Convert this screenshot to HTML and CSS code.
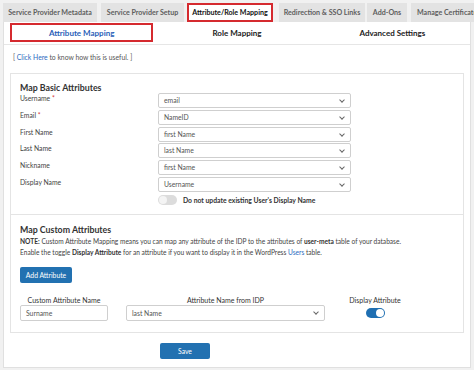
FILE: index.html
```html
<!DOCTYPE html>
<html>
<head>
<meta charset="utf-8">
<link rel="stylesheet" href="styles.css">
</head>
<body>
<div class="page">
  <nav class="tabs">
    <div class="tab t1">Service Provider Metadata</div>
    <div class="tab t2">Service Provider Setup</div>
    <div class="tab t3 active">Attribute/Role Mapping</div>
    <div class="tab t4">Redirection &amp; SSO Links</div>
    <div class="tab t5">Add-Ons</div>
    <div class="tab t6">Manage Certificate</div>
  </nav>
  <div class="panel">
    <div class="subtabs">
      <div class="subtab current"><span>Attribute Mapping</span></div>
      <div class="subtab">Role Mapping</div>
      <div class="subtab">Advanced Settings</div>
    </div>
    <p class="help">[ <a class="link">Click Here</a> to know how this is useful. ]</p>
    <section class="box basic">
      <h3>Map Basic Attributes</h3>
      <div class="rows">
        <div class="row"><label>Username <span class="req">*</span></label><div class="select">email</div></div>
        <div class="row"><label>Email <span class="req">*</span></label><div class="select">NameID</div></div>
        <div class="row"><label>First Name</label><div class="select">first Name</div></div>
        <div class="row"><label>Last Name</label><div class="select">last Name</div></div>
        <div class="row"><label>Nickname</label><div class="select">first Name</div></div>
        <div class="row"><label>Display Name</label><div class="select">Username</div></div>
        <div class="row toggle-row"><label></label><div class="opt"><span class="switch off"></span><span>Do not update existing User's Display Name</span></div></div>
      </div>
    </section>
    <section class="box custom">
      <h3>Map Custom Attributes</h3>
      <p class="note"><b>NOTE:</b> Custom Attribute Mapping means you can map any attribute of the IDP to the attributes of <b>user-meta</b> table of your database.<br>Enable the toggle <b>Display Attribute</b> for an attribute if you want to display it in the WordPress <a class="link">Users</a> table.</p>
      <button class="btn add">Add Attribute</button>
      <div class="cgrid">
        <div class="ch">Custom Attribute Name</div>
        <div class="ch">Attribute Name from IDP</div>
        <div class="ch">Display Attribute</div>
        <div class="input">Surname</div>
        <div class="select">last Name</div>
        <div class="sw"><span class="switch on"></span></div>
      </div>
    </section>
    <div class="actions"><button class="btn save">Save</button></div>
  </div>
</div>
</body>
</html>
```
FILE: styles.css
```css
* { box-sizing: border-box; }
html, body { margin: 0; padding: 0; }
body {
  background: #f1f1f1;
  font-family: "Lato", "Open Sans", sans-serif;
  color: #3c3c3c;
  width: 474px;
  height: 370px;
  overflow: hidden;
}
.page { padding-top: 3px; }
.tabs {
  display: flex;
  padding-left: 3px;
  height: 19px;
  white-space: nowrap;
}
.tab {
  background: #e3e3e3;
  color: #5e5e5e;
  font-size: 7.1px;
  font-weight: 700;
  text-align: center;
  line-height: 19px;
  height: 19px;
  flex: none;
  overflow: hidden;
  margin-right: 4px;
}
.t1 { width: 94px; }
.t2 { width: 83px; }
.t3 { width: 86px; margin-left: -1px; }
.t4 { width: 86px; margin-left: 2px; margin-right: 2px; }
.t5 { width: 40px; }
.t6 { width: 66px; text-align: left; padding-left: 6px; margin-right: 0; }
.tab.active {
  background: #fff;
  color: #111;
  border: 2px solid #d52a2f;
  line-height: 15px;
}
.panel {
  margin: 0 3px 0 3px;
  width: 468px;
  height: 346px;
  background: #fff;
  border: 1px solid #e0e0e0;
  border-top: none;
}
.subtabs {
  display: grid;
  grid-template-columns: repeat(3, 1fr);
  height: 23px;
  border-bottom: 1px solid #e6e6e6;
}
.subtab {
  font-size: 8px;
  font-weight: 700;
  color: #222;
  display: flex;
  align-items: center;
  justify-content: center;
}
.subtab.current { padding: 1px 6px 2px 6px; }
.subtab.current span {
  width: 100%;
  height: 100%;
  border: 2px solid #d52a2f;
  color: #2a5fb8;
  display: flex;
  align-items: center;
  justify-content: center;
}
.help {
  margin: 0;
  padding: 8px 0 0 9px;
  font-size: 6.8px;
  color: #555;
  height: 28px;
}
.link { color: #2a6bc0; }
.box {
  margin: 0 6px;
  border: 1px solid #e4e4e4;
  padding: 0 9px;
}
.box h3 {
  margin: 0;
  font-size: 8.8px;
  font-weight: 700;
  color: #333;
}
.basic { height: 142px; padding-top: 8px; }
.custom { border-top: none; height: 118px; padding-top: 9px; }
.rows { display: flex; flex-direction: column; gap: 2px; margin-top: 0; }
.row { display: flex; align-items: flex-start; height: 14.8px; }
.row label {
  width: 138px;
  font-size: 6.8px;
  color: #444;
  line-height: 9px;
  margin-top: 1px;
}
.req { color: #d63638; }
.select, .input {
  border: 1px solid #cfcfcf;
  border-radius: 2px;
  height: 15px;
  font-size: 6.8px;
  color: #555;
  line-height: 13px;
  padding-left: 5px;
  position: relative;
  background: #fff;
}
.row .select { width: 193px; }
.select::after {
  content: "";
  position: absolute;
  right: 6px;
  top: 4px;
  width: 3px;
  height: 3px;
  border-right: 1px solid #666;
  border-bottom: 1px solid #666;
  transform: rotate(45deg);
}
.toggle-row { margin-top: 1px; }
.opt { display: flex; align-items: center; gap: 6px; font-size: 6.8px; color: #333; font-weight: 700; }
.switch {
  display: inline-block;
  width: 19px;
  height: 10px;
  border-radius: 6px;
  position: relative;
}
.switch::after {
  content: "";
  position: absolute;
  top: 1px;
  width: 8px;
  height: 8px;
  border-radius: 50%;
  background: #fff;
}
.switch.off { background: #dcdcdc; }
.switch.off::after { left: 1px; background: #f4f4f4; }
.switch.on { background: #1f6fb2; }
.switch.on::after { right: 1px; }
.note {
  margin: 1px 0 0 0;
  font-size: 6.6px;
  line-height: 11px;
  color: #444;
}
.note b { color: #333; }
.btn {
  display: block;
  border: none;
  border-radius: 2px;
  background: #2271b1;
  color: #fff;
  font-family: inherit;
  font-size: 6.8px;
  height: 16px;
  padding: 0;
}
.add { width: 52px; margin-top: 9px; }
.cgrid {
  display: grid;
  grid-template-columns: 88px 199px 64px;
  column-gap: 18px;
  row-gap: 1px;
  margin-top: 13px;
  align-items: center;
}
.ch { font-size: 7px; color: #333; text-align: center; }
.input { height: 16px; line-height: 14px; }
.cgrid .select { height: 16px; line-height: 14px; }
.sw { display: flex; justify-content: center; }
.actions { padding-left: 156px; padding-top: 10px; }
.save { width: 50px; }
```
